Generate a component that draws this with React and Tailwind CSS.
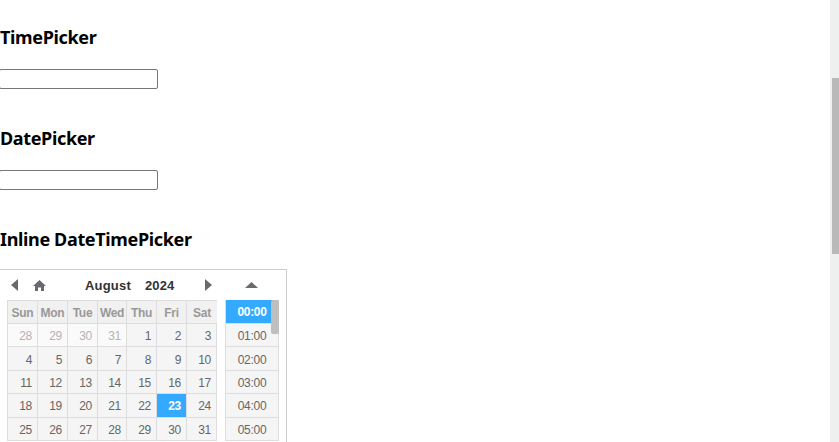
const weeks = [
  [[28, 1], [29, 1], [30, 1], [31, 1], [1], [2], [3]],
  [[4], [5], [6], [7], [8], [9], [10]],
  [[11], [12], [13], [14], [15], [16], [17]],
  [[18], [19], [20], [21], [22], [23, 0, 1], [24]],
  [[25], [26], [27], [28], [29], [30], [31]],
];
const days = ["Sun", "Mon", "Tue", "Wed", "Thu", "Fri", "Sat"];
const times = ["01:00", "02:00", "03:00", "04:00", "05:00"];

function Field({ title }) {
  return (
    <section className="h-[101px] pt-[25px]">
      <h2 className="h-[25px] text-[18px] leading-[25px] font-bold tracking-[-0.35px] text-black">{title}</h2>
      <input className="mt-[19px] ml-[-1px] block h-[20px] w-[159px] rounded-[2px] border border-[#767676] bg-white" />
    </section>
  );
}

function Arrow({ d, w, h, className }) {
  return (
    <svg width={w} height={h} viewBox={`0 0 ${w} ${h}`} className={className}>
      <path d={d} fill="#6d6870" />
    </svg>
  );
}

export default function App() {
  return (
    <div className="flex h-[442px] w-[839px] overflow-hidden bg-white font-['Liberation_Sans',sans-serif]">
      <main className="min-w-0 flex-1 font-['Noto_Sans',sans-serif]">
        <Field title="TimePicker" />
        <Field title="DatePicker" />
        <section className="pt-[25px]">
          <h2 className="h-[25px] text-[18px] leading-[25px] font-bold tracking-[-0.35px] text-black">Inline DateTimePicker</h2>
          <div className="mt-[17px] ml-[-1px] flex h-[200px] w-[288px] flex-col border border-[#ccc] pt-[4px] pl-[7px] font-['Liberation_Sans',sans-serif]">
            <div className="mb-[4px] flex h-[22px] w-[270px] shrink-0 items-center">
              <Arrow w={7} h={12} d="M7 0V12L0 6Z" className="ml-[4px]" />
              <Arrow w={13} h={11} d="M6.5 0L13 6H11V11H8V7.5H5V11H2V6H0Z" className="ml-[15px]" />
              <span className="ml-[39px] text-[13px] leading-none font-bold tracking-[0.2px] text-[#333]">August</span>
              <span className="ml-[14px] text-[13px] leading-none font-bold tracking-[0.1px] text-[#333]">2024</span>
              <Arrow w={7} h={12} d="M0 0V12L7 6Z" className="ml-[31px]" />
              <Arrow w={13} h={6} d="M6.5 0L13 6H0Z" className="ml-[33px]" />
            </div>
            <div className="flex gap-[8px]">
              <div className="grid w-[210px] shrink-0 grid-cols-[30px_30px_30px_29px_30px_30px_31px] border-b border-[#ddd] text-[12px] tracking-[-0.3px]">
                {days.map((d) => (
                  <div key={d} className="flex h-[23px] items-center justify-center border-t border-l border-[#ddd] bg-[#f1f1f1] pt-[2px] font-bold text-[#999] last:border-r">
                    {d}
                  </div>
                ))}
                {weeks.flat().map(([n, off, sel], i) => (
                  <div
                    key={i}
                    className={`flex h-[23.4px] items-center justify-end border-t border-l border-[#ddd] pt-[2px] pr-[5px] ${(i + 1) % 7 === 0 ? "border-r" : ""} ${sel ? "bg-[#33aaff] font-bold text-white" : off ? "bg-[#fafafa] text-[#b3b3b3]" : "bg-[#f5f5f5] text-[#666]"}`}
                  >
                    {n}
                  </div>
                ))}
              </div>
              <div className="relative h-[141px] w-[54px] shrink-0 border-x border-b border-[#ddd] text-center text-[12px] tracking-[-0.3px] text-[#666]">
                <div className="flex h-[23px] items-center justify-center bg-[#33aaff] pt-[1px] font-bold text-white">00:00</div>
                {times.map((t) => (
                  <div key={t} className="flex h-[23.4px] items-center justify-center border-t border-[#ddd] bg-[#f5f5f5] pt-[2px]">{t}</div>
                ))}
                <div className="absolute top-0 right-[-1px] h-[34px] w-[8px] rounded-[2px] bg-[#bfbfbf]" />
              </div>
            </div>
          </div>
        </section>
      </main>
      <aside className="flex w-[9px] shrink-0 flex-col bg-[#eef0ef] pt-[78px] pl-[2px]">
        <div className="h-[176px] bg-[#b9b9b9]" />
      </aside>
    </div>
  );
}
